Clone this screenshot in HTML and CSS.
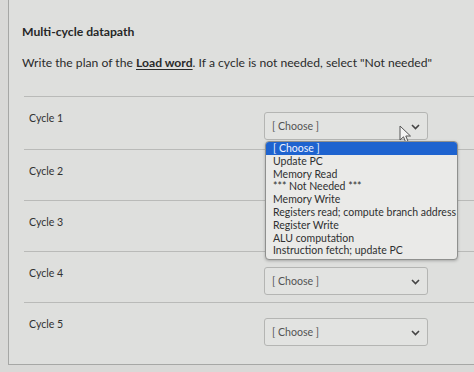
FILE: index.html
```html
<!DOCTYPE html>
<html>
<head>
<meta charset="utf-8">
<link rel="stylesheet" href="styles.css">
</head>
<body>
<div class="page">
  <div class="header">
    <div class="title">Multi-cycle datapath</div>
    <div class="prompt">Write the plan of the <u class="strong">Load word</u>. If a cycle is not needed, select "Not needed"</div>
  </div>
  <div class="rows">
    <div class="row first">
      <div class="label">Cycle 1</div>
      <div class="field">
        <div class="select"><span>[ Choose ]</span><svg class="chev" width="9" height="6" viewBox="0 0 9 6"><path d="M1 1 L4.5 4.5 L8 1" fill="none" stroke="#444" stroke-width="1.6"/></svg></div>
        <svg class="cursor" width="14" height="20" viewBox="0 0 14 20"><path d="M1 1 L1 15 L4.5 11.8 L7 18 L9.3 17 L6.8 11 L11.5 11 Z" fill="#f4f4f4" stroke="#555" stroke-width="1"/></svg>
        <div class="menu">
          <div class="opt sel">[ Choose ]</div>
          <div class="opt">Update PC</div>
          <div class="opt">Memory Read</div>
          <div class="opt">*** Not Needed ***</div>
          <div class="opt">Memory Write</div>
          <div class="opt">Registers read; compute branch address</div>
          <div class="opt">Register Write</div>
          <div class="opt">ALU computation</div>
          <div class="opt">Instruction fetch; update PC</div>
        </div>
      </div>
    </div>
    <div class="row">
      <div class="label">Cycle 2</div>
      <div class="field"></div>
    </div>
    <div class="row">
      <div class="label">Cycle 3</div>
      <div class="field"></div>
    </div>
    <div class="row">
      <div class="label">Cycle 4</div>
      <div class="field">
        <div class="select"><span>[ Choose ]</span><svg class="chev" width="9" height="6" viewBox="0 0 9 6"><path d="M1 1 L4.5 4.5 L8 1" fill="none" stroke="#444" stroke-width="1.6"/></svg></div>
      </div>
    </div>
    <div class="row">
      <div class="label">Cycle 5</div>
      <div class="field">
        <div class="select"><span>[ Choose ]</span><svg class="chev" width="9" height="6" viewBox="0 0 9 6"><path d="M1 1 L4.5 4.5 L8 1" fill="none" stroke="#444" stroke-width="1.6"/></svg></div>
      </div>
    </div>
  </div>
</div>
</body>
</html>
```
FILE: styles.css
```css
html, body {
  margin: 0;
  padding: 0;
  background: #d9d9d7;
}
body {
  font-family: Lato, "Open Sans", sans-serif;
  color: #2d2e2e;
  width: 474px;
  height: 372px;
  overflow: hidden;
}
.page {
  margin-left: 8px;
  height: 365px;
  box-sizing: border-box;
  border-left: 1px solid #a6a7a5;
  border-bottom: 1px solid #a6a7a5;
  background: #dedfdd;
}
.header {
  padding: 24px 0 0 13px;
  height: 96px;
  box-sizing: border-box;
}
.title {
  font-weight: 700;
  font-size: 12.2px;
  line-height: 16px;
  color: #262727;
}
.prompt {
  margin-top: 15px;
  font-size: 12.15px;
  line-height: 16px;
  color: #2a2b2b;
  white-space: nowrap;
}
.strong {
  font-weight: 700;
  text-decoration-thickness: 1px;
  text-underline-offset: 2px;
}
.rows {
  margin-left: 15px;
}
.row {
  border-top: 1px solid #b9bab8;
  height: 51px;
  box-sizing: border-box;
  display: flex;
}
.row.first { height: 53px; }
.label {
  width: 240px;
  box-sizing: border-box;
  padding-left: 5px;
  margin-top: 14px;
  font-size: 10.6px;
  line-height: 14px;
  color: #313232;
}
.field {
  position: relative;
  padding-top: 15px;
}
.select {
  width: 164px;
  height: 28px;
  box-sizing: border-box;
  border: 1px solid #b4b5b3;
  border-radius: 3px;
  background: #e2e3e1;
  display: flex;
  align-items: center;
  justify-content: space-between;
  padding: 0 7px 0 7px;
  font-size: 10.6px;
  color: #525353;
}
.chev { margin-top: 1px; }
.cursor {
  position: absolute;
  left: 135px;
  top: 28px;
}
.menu {
  position: absolute;
  left: 1px;
  top: 44px;
  width: 193px;
  box-sizing: border-box;
  background: #eaeae8;
  border: 1px solid #8f908e;
  border-radius: 4px;
  box-shadow: 0 1px 3px rgba(0,0,0,0.25);
  padding: 0 0 2px 0;
  z-index: 2;
}
.opt {
  font-size: 10.5px;
  line-height: 12.8px;
  padding-left: 7px;
  color: #2f3030;
  white-space: nowrap;
}
.opt.sel {
  background: #1e63cf;
  color: #eef3ff;
  border-radius: 3px 3px 0 0;
}
```
